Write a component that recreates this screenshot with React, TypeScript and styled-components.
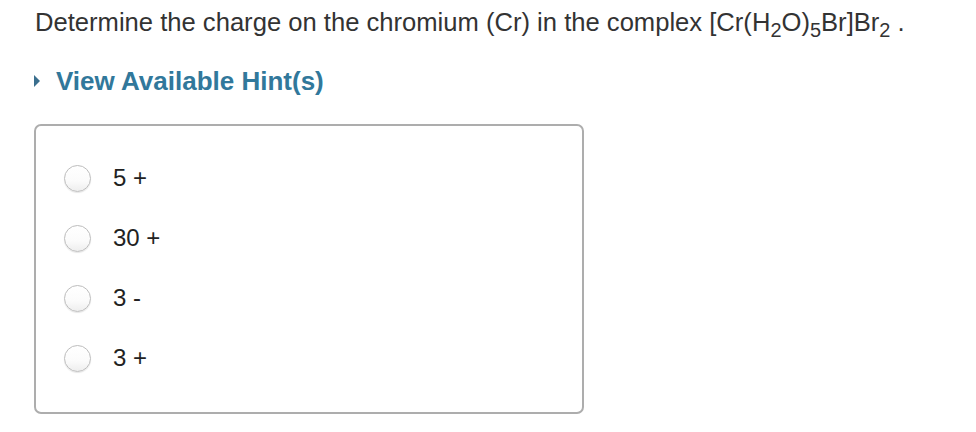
import React from 'react';
import styled, { createGlobalStyle } from 'styled-components';

const GlobalStyle = createGlobalStyle`
  html, body {
    margin: 0;
    padding: 0;
    background: #fff;
  }
  body {
    font-family: "Liberation Sans", Arial, sans-serif;
    color: #333;
  }
`;

const Page = styled.div`
  padding: 7px 0 0 34px;
`;

const Question = styled.p`
  margin: 0 0 29px 1px;
  font-size: 25.6px;
  line-height: 30px;
  color: #333;
`;

const Sub = styled.sub`
  font-size: 0.78em;
  line-height: 0;
  vertical-align: -0.28em;
`;

const HintToggle = styled.button`
  display: flex;
  align-items: center;
  gap: 16px;
  margin: 0 0 28px;
  padding: 0;
  border: none;
  background: none;
  font-family: inherit;
  font-size: 26px;
  line-height: 30px;
  font-weight: bold;
  color: #31789b;
  cursor: pointer;
`;

const Caret = styled.span`
  display: block;
  width: 0;
  height: 0;
  border-top: 6.5px solid transparent;
  border-bottom: 6.5px solid transparent;
  border-left: 6px solid #3b6f8e;
`;

const OptionsBox = styled.div`
  box-sizing: border-box;
  width: 550px;
  height: 290px;
  border: 2px solid #adadad;
  border-radius: 7px;
  padding: 22px 0 24px 28px;
  display: flex;
  flex-direction: column;
`;

const OptionRow = styled.label`
  height: 60px;
  display: flex;
  align-items: center;
  gap: 22px;
  font-size: 24px;
  color: #222;
  cursor: pointer;
`;

const Radio = styled.span`
  box-sizing: border-box;
  width: 27px;
  height: 27px;
  border-radius: 50%;
  border: 1px solid #bdbdbd;
  background: linear-gradient(to bottom, #ffffff 0%, #fbfbfb 60%, #eeeeee 100%);
  box-shadow: 0 1px 1px rgba(0, 0, 0, 0.1);
  flex-shrink: 0;
`;

const choices = ['5 +', '30 +', '3 -', '3 +'];

export default function App() {
  return (
    <Page>
      <GlobalStyle />
      <Question>
        Determine the charge on the chromium (Cr) in the complex [Cr(H<Sub>2</Sub>O)<Sub>5</Sub>Br]Br<Sub>2</Sub> .
      </Question>
      <HintToggle>
        <Caret />
        View Available Hint(s)
      </HintToggle>
      <OptionsBox>
        {choices.map(choice => (
          <OptionRow key={choice}>
            <Radio />
            {choice}
          </OptionRow>
        ))}
      </OptionsBox>
    </Page>
  );
}
